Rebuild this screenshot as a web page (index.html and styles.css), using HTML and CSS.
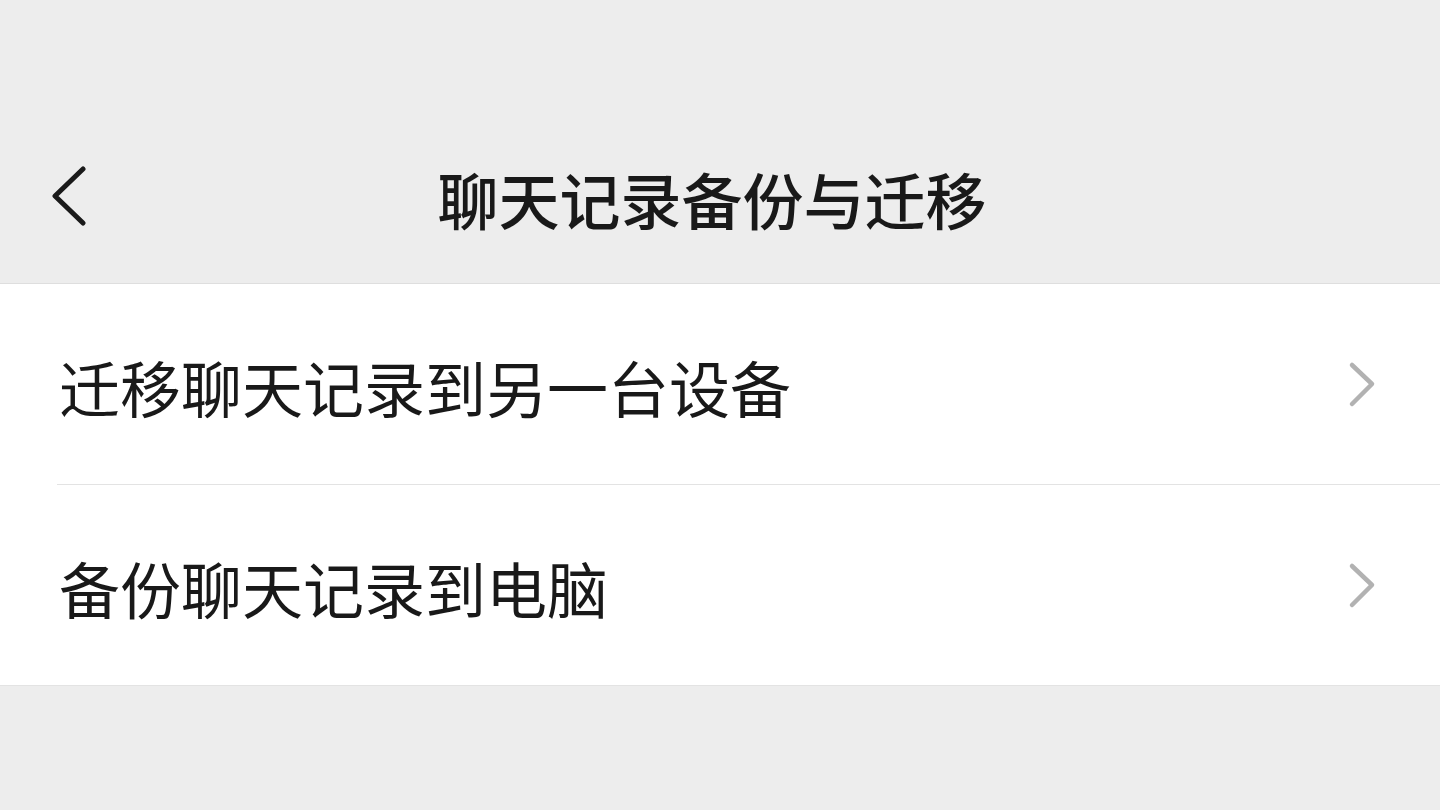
FILE: index.html
```html
<!DOCTYPE html>
<html lang="zh-CN">
<head>
  <meta charset="UTF-8" />
  <meta name="viewport" content="width=device-width, initial-scale=1.0" />
  <title>聊天记录备份与迁移</title>
  <link rel="stylesheet" href="styles.css">
</head>
<body>
  <header class="topbar">
    <nav class="navbar">
      <a class="back" href="#" aria-label="返回">
        <svg width="40" height="64" viewBox="0 0 40 64">
          <polyline points="31,4 3,31 31,58" fill="none" stroke="#1a1a1a" stroke-width="5" stroke-linecap="round" stroke-linejoin="round" />
        </svg>
      </a>
      <h1 class="title">聊天记录备份与迁移</h1>
    </nav>
  </header>

  <main>
    <ul class="menu">
      <li class="menu-item">
        <span class="label">迁移聊天记录到另一台设备</span>
        <svg class="arrow" width="30" height="48" viewBox="0 0 30 48">
          <polyline points="5,4 25,23 5,43" fill="none" stroke="#b2b2b2" stroke-width="4.5" stroke-linecap="round" stroke-linejoin="round" />
        </svg>
      </li>
      <li class="menu-item">
        <span class="label">备份聊天记录到电脑</span>
        <svg class="arrow" width="30" height="48" viewBox="0 0 30 48">
          <polyline points="5,4 25,23 5,43" fill="none" stroke="#b2b2b2" stroke-width="4.5" stroke-linecap="round" stroke-linejoin="round" />
        </svg>
      </li>
    </ul>
  </main>
</body>
</html>
```

FILE: styles.css
```css
body {
  margin: 0;
  padding: 0;
  background: #ededed;
  color: #191919;
  font-family: "Noto Sans CJK SC", "Noto Sans", sans-serif;
}
.topbar {
  height: 284px;
  box-sizing: border-box;
  padding-top: 142px;
  border-bottom: 1px solid #dedede;
}
.navbar {
  position: relative;
  height: 112px;
  display: flex;
  align-items: center;
  justify-content: center;
}
.back {
  position: absolute;
  left: 52px;
  top: 23px;
  display: block;
  line-height: 0;
}
.title {
  margin: 0 16px 0 0;
  font-size: 61px;
  font-weight: 500;
  line-height: 1;
}
.menu {
  list-style: none;
  margin: 0;
  padding: 0;
  background: #fff;
  border-bottom: 1px solid #e3e3e3;
}
.menu-item {
  height: 200px;
  display: flex;
  align-items: center;
  justify-content: space-between;
  margin-left: 57px;
  padding-right: 63px;
}
.menu-item + .menu-item {
  border-top: 1px solid #e3e3e3;
}
.label {
  font-size: 61px;
  line-height: 1;
  padding-left: 2px;
  padding-top: 4px;
}
.arrow {
  display: block;
  margin-top: 2px;
}
```
